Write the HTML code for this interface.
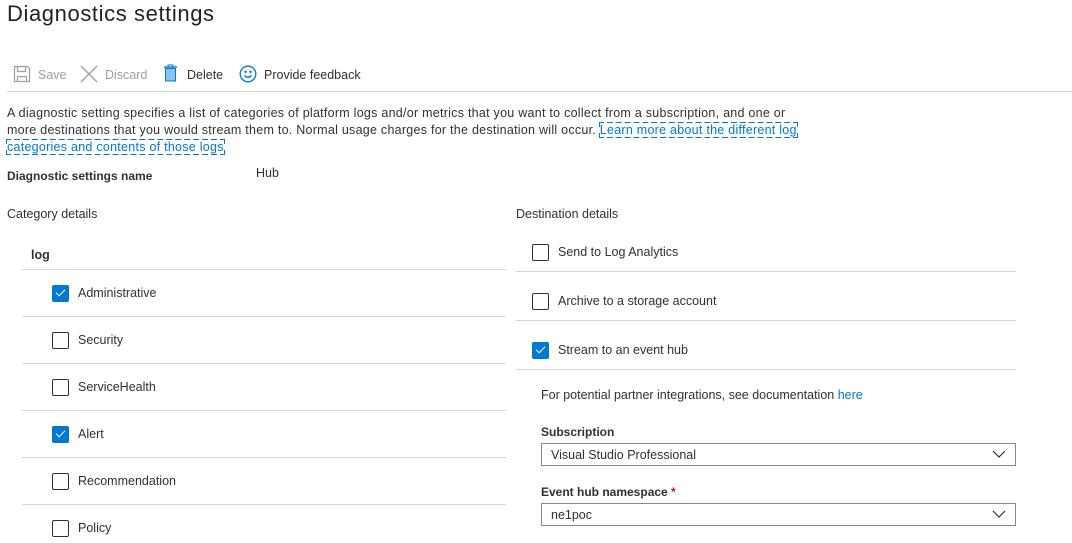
<!DOCTYPE html><html><head><style>
body{margin:0;width:1072px;height:543px;overflow:hidden;background:#fff;font-family:"Liberation Sans",sans-serif;color:#323130;position:relative;font-size:12.5px}
.a{position:absolute;white-space:nowrap}
.cb{position:absolute;width:17px;height:17px;border:1px solid #323130;border-radius:2px;box-sizing:border-box}
.cb.on{background:#0078d4;border-color:#0078d4}
.cb.on:after{content:"";position:absolute;left:5px;top:1px;width:4px;height:8px;border:solid #fff;border-width:0 1.5px 1.5px 0;transform:rotate(45deg)}
.hl{position:absolute;height:1px;background:#d6d6d6}
.sel{position:absolute;left:541px;width:475px;height:23px;border:1px solid #8a8886;box-sizing:border-box;padding:4px 9px;font-size:12.5px}
.sel svg{position:absolute;right:9px;top:6px}
a{color:#0078d4;text-decoration:none}
</style></head><body>
<div class="a" style="left:7px;top:1px;font-size:22px;letter-spacing:0.6px;color:#222">Diagnostics settings</div>

<svg class="a" style="left:13px;top:65px" width="18" height="18" viewBox="0 0 18 18" fill="none" stroke="#a19f9d" stroke-width="1.2"><path d="M1.5 1.5h13l2 2v13h-15z"/><path d="M4.5 1.5v5h8v-5M4.5 16.5v-5h9v5"/></svg>
<div class="a" style="left:38px;top:68px;color:#a19f9d">Save</div>
<svg class="a" style="left:80px;top:65px" width="18" height="18" viewBox="0 0 18 18" stroke="#a19f9d" stroke-width="1.3"><path d="M1 1L17 17M17 1L1 17"/></svg>
<div class="a" style="left:105px;top:68px;color:#a19f9d">Discard</div>
<svg class="a" style="left:163px;top:64px" width="15" height="18" viewBox="0 0 15 18"><path d="M1 3h13" stroke="#0078d4" stroke-width="1.4"/><path d="M5 3V1h5v2" stroke="#0078d4" fill="none"/><rect x="2.5" y="4.5" width="10" height="12.5" fill="#8cc4ee" stroke="#0078d4"/></svg>
<div class="a" style="left:187px;top:68px">Delete</div>
<svg class="a" style="left:239px;top:65px" width="18" height="18" viewBox="0 0 18 18" fill="none" stroke="#0078d4" stroke-width="1.3"><circle cx="9" cy="9" r="7.8"/><path d="M5.5 10.5q3.5 3.5 7 0"/><circle cx="6.5" cy="6.8" r=".6" fill="#0078d4"/><circle cx="11.5" cy="6.8" r=".6" fill="#0078d4"/></svg>
<div class="a" style="left:264px;top:68px">Provide feedback</div>
<div class="hl" style="left:7px;width:1065px;top:91px"></div>

<div class="a" style="left:7px;top:105px;line-height:17px;letter-spacing:0.26px">A diagnostic setting specifies a list of categories of platform logs and/or metrics that you want to collect from a subscription, and one or<br>more destinations that you would stream them to. Normal usage charges for the destination will occur. <a style="outline:1px dashed #0078d4">Learn more about the different log<br>categories and contents of those logs</a></div>

<div class="a" style="left:7px;top:169px;font-weight:bold;font-size:12px">Diagnostic settings name</div>
<div class="a" style="left:256px;top:166px">Hub</div>
<div class="a" style="left:7px;top:207px">Category details</div>
<div class="a" style="left:516px;top:207px">Destination details</div>

<div class="a" style="left:31px;top:248px;font-weight:bold">log</div>
<div class="hl" style="left:22px;width:484px;top:269px"></div>
<div class="cb on" style="left:52px;top:285px"></div><div class="a" style="left:78px;top:286px">Administrative</div>
<div class="hl" style="left:22px;width:484px;top:316px"></div>
<div class="cb" style="left:52px;top:332px"></div><div class="a" style="left:78px;top:333px">Security</div>
<div class="hl" style="left:22px;width:484px;top:363px"></div>
<div class="cb" style="left:52px;top:379px"></div><div class="a" style="left:78px;top:380px">ServiceHealth</div>
<div class="hl" style="left:22px;width:484px;top:410px"></div>
<div class="cb on" style="left:52px;top:426px"></div><div class="a" style="left:78px;top:427px">Alert</div>
<div class="hl" style="left:22px;width:484px;top:457px"></div>
<div class="cb" style="left:52px;top:473px"></div><div class="a" style="left:78px;top:474px">Recommendation</div>
<div class="hl" style="left:22px;width:484px;top:504px"></div>
<div class="cb" style="left:52px;top:520px"></div><div class="a" style="left:78px;top:521px">Policy</div>

<div class="cb" style="left:532px;top:244px"></div><div class="a" style="left:558px;top:245px">Send to Log Analytics</div>
<div class="hl" style="left:516px;width:500px;top:271px"></div>
<div class="cb" style="left:532px;top:293px"></div><div class="a" style="left:558px;top:294px">Archive to a storage account</div>
<div class="hl" style="left:516px;width:500px;top:320px"></div>
<div class="cb on" style="left:532px;top:342px"></div><div class="a" style="left:558px;top:343px">Stream to an event hub</div>
<div class="hl" style="left:516px;width:500px;top:369px"></div>
<div class="a" style="left:541px;top:388px">For potential partner integrations, see documentation <a>here</a></div>
<div class="a" style="left:541px;top:425px;font-weight:bold;font-size:12px">Subscription</div>
<div class="sel" style="top:443px">Visual Studio Professional<svg width="14" height="9" viewBox="0 0 14 9" fill="none" stroke="#323130" stroke-width="1.2"><path d="M1 1l6 6 6-6"/></svg></div>
<div class="a" style="left:541px;top:485px;font-weight:bold;font-size:12px">Event hub namespace <span style="color:#a4262c">*</span></div>
<div class="sel" style="top:503px">ne1poc<svg width="14" height="9" viewBox="0 0 14 9" fill="none" stroke="#323130" stroke-width="1.2"><path d="M1 1l6 6 6-6"/></svg></div>
</body></html>
